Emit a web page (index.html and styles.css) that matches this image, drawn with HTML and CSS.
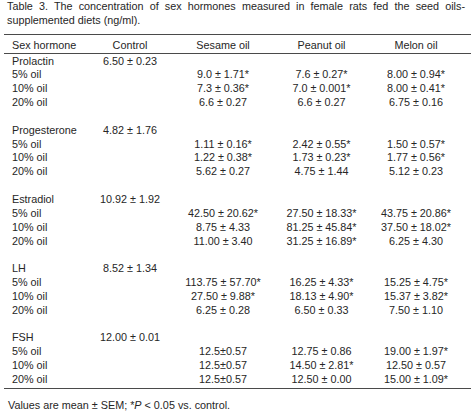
FILE: index.html
```html
<!DOCTYPE html>
<html>
<head>
<meta charset="utf-8">
<link rel="stylesheet" href="styles.css">
</head>
<body>
<div class="caption">
  <span class="cap-line1">Table 3. The concentration of sex hormones measured in female rats fed the seed oils-</span>
  <span class="cap-line2">supplemented diets (ng/ml).</span>
</div>
<table class="data">
  <thead>
    <tr>
      <th class="c-label">Sex hormone</th>
      <th class="c-ctrl">Control</th>
      <th class="c-ses">Sesame oil</th>
      <th class="c-pea">Peanut oil</th>
      <th class="c-mel">Melon oil</th>
    </tr>
  </thead>
  <tbody>
    <tr class="first"><td class="c-label">Prolactin</td><td class="c-ctrl">6.50 ± 0.23</td><td></td><td></td><td class="c-mel"></td></tr>
    <tr><td class="c-label">5% oil</td><td></td><td>9.0 ± 1.71*</td><td>7.6 ± 0.27*</td><td class="c-mel">8.00 ± 0.94*</td></tr>
    <tr><td class="c-label">10% oil</td><td></td><td>7.3 ± 0.36*</td><td>7.0 ± 0.001*</td><td class="c-mel">8.00 ± 0.41*</td></tr>
    <tr><td class="c-label">20% oil</td><td></td><td>6.6 ± 0.27</td><td>6.6 ± 0.27</td><td class="c-mel">6.75 ± 0.16</td></tr>
    <tr class="gap"><td colspan="5">&nbsp;</td></tr>

    <tr><td class="c-label">Progesterone</td><td class="c-ctrl">4.82 ± 1.76</td><td></td><td></td><td class="c-mel"></td></tr>
    <tr><td class="c-label">5% oil</td><td></td><td>1.11 ± 0.16*</td><td>2.42 ± 0.55*</td><td class="c-mel">1.50 ± 0.57*</td></tr>
    <tr><td class="c-label">10% oil</td><td></td><td>1.22 ± 0.38*</td><td>1.73 ± 0.23*</td><td class="c-mel">1.77 ± 0.56*</td></tr>
    <tr><td class="c-label">20% oil</td><td></td><td>5.62 ± 0.27</td><td>4.75 ± 1.44</td><td class="c-mel">5.12 ± 0.23</td></tr>
    <tr class="gap"><td colspan="5">&nbsp;</td></tr>

    <tr><td class="c-label">Estradiol</td><td class="c-ctrl">10.92 ± 1.92</td><td></td><td></td><td class="c-mel"></td></tr>
    <tr><td class="c-label">5% oil</td><td></td><td>42.50 ± 20.62*</td><td>27.50 ± 18.33*</td><td class="c-mel">43.75 ± 20.86*</td></tr>
    <tr><td class="c-label">10% oil</td><td></td><td>8.75 ± 4.33</td><td>81.25 ± 45.84*</td><td class="c-mel">37.50 ± 18.02*</td></tr>
    <tr><td class="c-label">20% oil</td><td></td><td>11.00 ± 3.40</td><td>31.25 ± 16.89*</td><td class="c-mel">6.25 ± 4.30</td></tr>
    <tr class="gap"><td colspan="5">&nbsp;</td></tr>

    <tr><td class="c-label">LH</td><td class="c-ctrl">8.52 ± 1.34</td><td></td><td></td><td class="c-mel"></td></tr>
    <tr><td class="c-label">5% oil</td><td></td><td>113.75 ± 57.70*</td><td>16.25 ± 4.33*</td><td class="c-mel">15.25 ± 4.75*</td></tr>
    <tr><td class="c-label">10% oil</td><td></td><td>27.50 ± 9.88*</td><td>18.13 ± 4.90*</td><td class="c-mel">15.37 ± 3.82*</td></tr>
    <tr><td class="c-label">20% oil</td><td></td><td>6.25 ± 0.28</td><td>6.50 ± 0.33</td><td class="c-mel">7.50 ± 1.10</td></tr>
    <tr class="gap"><td colspan="5">&nbsp;</td></tr>

    <tr><td class="c-label">FSH</td><td class="c-ctrl">12.00 ± 0.01</td><td></td><td></td><td class="c-mel"></td></tr>
    <tr><td class="c-label">5% oil</td><td></td><td>12.5±0.57</td><td>12.75 ± 0.86</td><td class="c-mel">19.00 ± 1.97*</td></tr>
    <tr><td class="c-label">10% oil</td><td></td><td>12.5±0.57</td><td>14.50 ± 2.81*</td><td class="c-mel">12.50 ± 0.57</td></tr>
    <tr class="last"><td class="c-label">20% oil</td><td></td><td>12.5±0.57</td><td>12.50 ± 0.00</td><td class="c-mel">15.00 ± 1.09*</td></tr>
  </tbody>
</table>
<p class="note">Values are mean ± SEM; *<i>P</i> &lt; 0.05 vs. control.</p>
</body>
</html>
```

FILE: styles.css
```css
html, body {
  margin: 0;
  padding: 0;
  background: #ffffff;
}

body {
  font-family: "Liberation Sans", Arial, sans-serif;
  font-size: 10.8px;
  color: #262626;
  width: 474px;
}

.caption {
  padding: 0 9px 0 7px;
  line-height: 13.7px;
}

.cap-line1 {
  display: block;
  text-align: justify;
  text-align-last: justify;
  white-space: nowrap;
}

.cap-line2 {
  display: block;
}

.data {
  margin: 7px 0 0 4px;
  width: 467px;
  border-collapse: collapse;
  table-layout: fixed;
  border-top: 1px solid #4a4a4a;
  border-bottom: 1px solid #4a4a4a;
}

.data th,
.data td {
  padding: 0;
  line-height: 13.85px;
  height: 13.85px;
  font-weight: normal;
  text-align: center;
  white-space: nowrap;
}

.data thead th {
  padding-top: 3.3px;
  border-bottom: 1px solid #4a4a4a;
}

.data tr.first td {
  padding-top: 1px;
}

.data tr.last td {
  padding-bottom: 1px;
}

.data .c-label {
  width: 72px;
  padding-left: 8px;
  text-align: left;
}

.data .c-ctrl {
  width: 92px;
}

.data .c-ses {
  width: 94px;
}

.data .c-pea {
  width: 103px;
}

.data .c-mel {
  padding-right: 12px;
}

.note {
  margin: 10px 0 0 8px;
  line-height: 13.85px;
}

.note i {
  font-style: italic;
}
```
